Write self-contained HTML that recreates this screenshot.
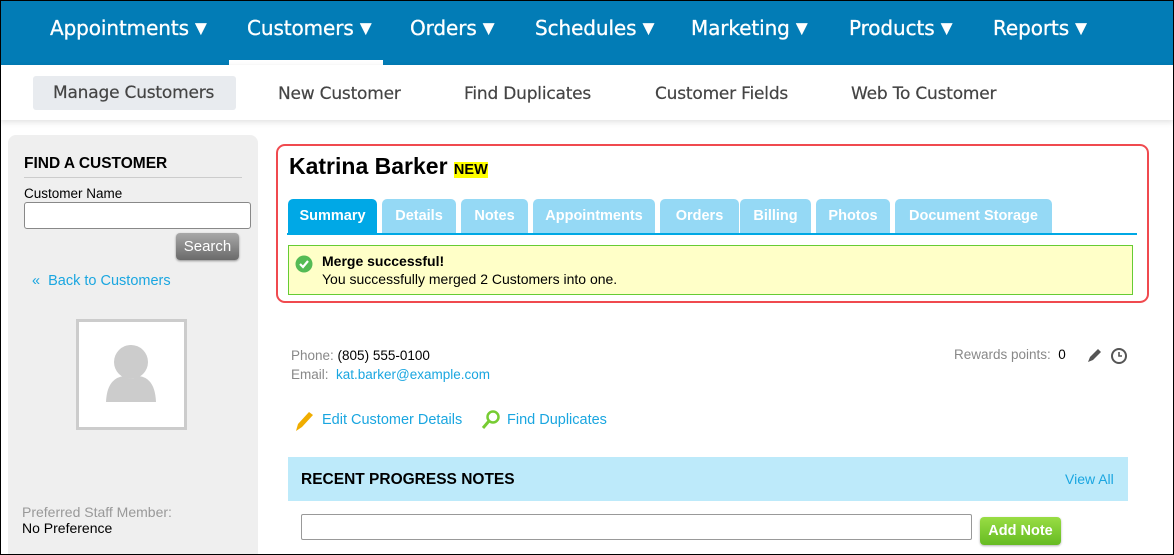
<!DOCTYPE html>
<html><head><style>
*{margin:0;padding:0;box-sizing:border-box}
html,body{width:1174px;height:555px;overflow:hidden}
body{background:#fff;font-family:"Liberation Sans",Arial,sans-serif;position:relative}
.frame{position:absolute;left:0;top:0;width:1174px;height:555px;border:1px solid #000;pointer-events:none;z-index:9}
.top{position:absolute;left:0;top:0;width:1174px;height:65px;background:#027cb6}
.top span{position:absolute;top:16px;color:#fff;font-family:"DejaVu Sans",sans-serif;font-size:20px;letter-spacing:-0.1px;-webkit-text-stroke:0.3px #fff}
.top span i{font-style:normal;font-size:15px;vertical-align:2px}
.top .ul{position:absolute;left:229px;top:60px;width:154px;height:5px;background:#fff}
.sub{position:absolute;left:0;top:65px;width:1174px;height:55px;background:#fff;box-shadow:0 2px 6px rgba(0,0,0,.12)}
.sub span{position:absolute;top:19px;color:#444;font-family:"DejaVu Sans",sans-serif;font-size:17px;letter-spacing:-0.2px;-webkit-text-stroke:0.2px #444}
.sub .act{left:33px;top:11px;width:203px;height:34px;background:#e8ebef;border-radius:3px;padding-top:7px;padding-left:20px}
.side{position:absolute;left:8px;top:135px;width:250px;height:420px;background:#efefef;border-radius:8px 8px 0 0}
.a{color:#1aa6e0}
</style></head><body>
<div class="top">
<span style="left:50px">Appointments <i>▼</i></span>
<span style="left:247px">Customers <i>▼</i></span>
<span style="left:410px">Orders <i>▼</i></span>
<span style="left:535px">Schedules <i>▼</i></span>
<span style="left:691px">Marketing <i>▼</i></span>
<span style="left:849px">Products <i>▼</i></span>
<span style="left:993px">Reports <i>▼</i></span>
<div class="ul"></div>
</div>
<div class="sub">
<span class="act">Manage Customers</span>
<span style="left:278px">New Customer</span>
<span style="left:464px">Find Duplicates</span>
<span style="left:655px">Customer Fields</span>
<span style="left:851px">Web To Customer</span>
</div>
<div class="side">
<div style="position:absolute;left:16px;top:20px;font-weight:bold;font-size:15.5px">FIND A CUSTOMER</div>
<div style="position:absolute;left:16px;top:42px;width:218px;height:1px;background:#ccc"></div>
<div style="position:absolute;left:16px;top:51px;font-size:13.5px">Customer Name</div>
<div style="position:absolute;left:16px;top:67px;width:227px;height:27px;background:#fff;border:1px solid #888;border-radius:3px"></div>
<div style="position:absolute;left:168px;top:98px;width:63px;height:27px;border-radius:4px;background:linear-gradient(#a8a8a8,#6a6a6a);color:#fff;font-size:15px;text-align:center;line-height:27px;box-shadow:0 1px 2px rgba(0,0,0,.4)">Search</div>
<div class="a" style="position:absolute;left:24px;top:138px;font-size:14.5px">«&nbsp; Back to Customers</div>
<div style="position:absolute;left:68px;top:184px;width:111px;height:111px;background:#fff;border:3px solid #ccc">
<svg width="105" height="105"><circle cx="52" cy="40" r="17" fill="#ccc"/><path d="M27 80 Q28 56 45 54 Q52 60 60 54 Q76 56 77 80Z" fill="#ccc"/></svg></div>
<div style="position:absolute;left:14px;top:369px;font-size:14px;color:#999">Preferred Staff Member:</div>
<div style="position:absolute;left:14px;top:385px;font-size:14px">No Preference</div>
</div>
<div style="position:absolute;left:276px;top:144px;width:873px;height:159px;border:2.5px solid #f04a4f;border-radius:9px"></div>
<div style="position:absolute;left:289px;top:153px;font-size:23px;font-weight:bold">Katrina Barker <span style="background:#ff0;font-size:14.5px">NEW</span></div>
<div style="position:absolute;left:287px;top:233px;width:850px;height:2px;background:#00a8e4"></div>
<div style="position:absolute;left:288px;top:199px;font-weight:bold;font-size:14.5px;color:#fff">
<span style="position:absolute;left:0;width:89px;height:34px;background:#00a8e6;border-radius:5px 5px 0 0;text-align:center;line-height:34px">Summary</span>
<span style="position:absolute;left:94px;width:74px;height:34px;background:#95d9f5;border-radius:5px 5px 0 0;text-align:center;line-height:34px">Details</span>
<span style="position:absolute;left:173px;width:67px;height:34px;background:#95d9f5;border-radius:5px 5px 0 0;text-align:center;line-height:34px">Notes</span>
<span style="position:absolute;left:245px;width:122px;height:34px;background:#95d9f5;border-radius:5px 5px 0 0;text-align:center;line-height:34px">Appointments</span>
<span style="position:absolute;left:372px;width:79px;height:34px;background:#95d9f5;border-radius:5px 5px 0 0;text-align:center;line-height:34px">Orders</span>
<span style="position:absolute;left:452px;width:71px;height:34px;background:#95d9f5;border-radius:5px 5px 0 0;text-align:center;line-height:34px">Billing</span>
<span style="position:absolute;left:528px;width:74px;height:34px;background:#95d9f5;border-radius:5px 5px 0 0;text-align:center;line-height:34px">Photos</span>
<span style="position:absolute;left:607px;width:157px;height:34px;background:#95d9f5;border-radius:5px 5px 0 0;text-align:center;line-height:34px">Document Storage</span>
</div>
<div style="position:absolute;left:288px;top:245px;width:845px;height:50px;background:#ffffc8;border:1px solid #6c3"></div>
<svg style="position:absolute;left:295px;top:255px" width="18" height="18"><circle cx="9" cy="9" r="8.5" fill="#5b5"/><path d="M5 9l3 3 5-6" stroke="#fff" stroke-width="2.2" fill="none"/></svg>
<div style="position:absolute;left:322px;top:253px;font-size:14px;font-weight:bold">Merge successful!</div>
<div style="position:absolute;left:322px;top:271px;font-size:14px">You successfully merged 2 Customers into one.</div>
<div style="position:absolute;left:291px;top:348px;font-size:13.5px;color:#888">Phone: <span style="color:#000">(805) 555-0100</span></div>
<div style="position:absolute;left:291px;top:367px;font-size:13.5px;color:#888">Email:&nbsp; <span class="a">kat.barker@example.com</span></div>
<div style="position:absolute;left:954px;top:347px;font-size:13.5px;color:#888">Rewards points:&nbsp; <span style="color:#000">0</span></div>
<svg style="position:absolute;left:1085px;top:347px" width="44" height="18"><path d="M3 15l2-5 8-8 3 3-8 8z" fill="#555"/><circle cx="34" cy="9" r="7" fill="none" stroke="#555" stroke-width="2"/><path d="M34 5v4h3" stroke="#555" stroke-width="1.6" fill="none"/></svg>
<svg style="position:absolute;left:294px;top:409px" width="22" height="24"><path d="M2 22l2-7L15 3l4 3L8 18z" fill="#f0ad00"/></svg>
<div class="a" style="position:absolute;left:322px;top:412px;font-size:14.5px">Edit Customer Details</div>
<svg style="position:absolute;left:480px;top:409px" width="22" height="22"><circle cx="13" cy="8" r="5.5" fill="none" stroke="#7c3" stroke-width="2.5"/><path d="M9 12l-6 7" stroke="#7c3" stroke-width="3"/></svg>
<div class="a" style="position:absolute;left:507px;top:412px;font-size:14.5px">Find Duplicates</div>
<div style="position:absolute;left:288px;top:457px;width:840px;height:44px;background:#bdeafa"></div>
<div style="position:absolute;left:301px;top:471px;font-size:15.5px;font-weight:bold">RECENT PROGRESS NOTES</div>
<div class="a" style="position:absolute;left:1065px;top:471px;font-size:14px">View All</div>
<div style="position:absolute;left:301px;top:514px;width:671px;height:26px;border:1px solid #999;border-radius:2px"></div>
<div style="position:absolute;left:980px;top:517px;width:81px;height:28px;border-radius:4px;background:linear-gradient(#9d4,#6b2);color:#fff;font-weight:bold;font-size:14.5px;text-align:center;line-height:28px;box-shadow:0 1px 2px rgba(0,0,0,.3)">Add Note</div>
<div class="frame"></div>
</body></html>
